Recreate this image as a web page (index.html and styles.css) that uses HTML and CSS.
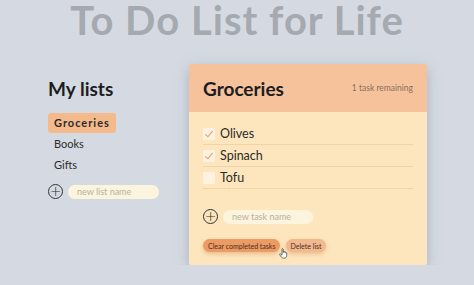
FILE: index.html
```html
<!DOCTYPE html>
<html lang="en">
<head>
  <meta charset="UTF-8" />
  <meta name="viewport" content="width=device-width, initial-scale=1.0"/>
  <title>To Do List for Life</title>
  <link rel="stylesheet" href="styles.css">
</head>
<body>
  <h1 class="title">To Do List for Life</h1>

  <div class="main">
    <div class="all-tasks">
      <h2 class="task-list-title">My lists</h2>
      <ul class="task-list">
        <li class="list-name active-list">Groceries</li>
        <li class="list-name">Books</li>
        <li class="list-name">Gifts</li>
      </ul>
      <form class="new-form" action="">
        <button class="btn-create" type="button">+</button>
        <input type="text" class="new new-list" placeholder="new list name">
      </form>
    </div>

    <div class="todo-list">
      <div class="todo-header">
        <h2 class="list-title">Groceries</h2>
        <p class="task-count">1 task remaining</p>
      </div>

      <div class="todo-body">
        <div class="tasks">
          <div class="task">
            <span class="check checked"></span>
            <span class="task-name">Olives</span>
          </div>
          <div class="task">
            <span class="check checked"></span>
            <span class="task-name">Spinach</span>
          </div>
          <div class="task">
            <span class="check"></span>
            <span class="task-name">Tofu</span>
          </div>
        </div>

        <form class="new-form new-task-form" action="">
          <button class="btn-create" type="button">+</button>
          <input type="text" class="new new-task" placeholder="new task name">
        </form>

        <div class="delete-stuff">
          <button class="btn-delete clear">Clear completed tasks
            <!-- mouse pointer from the screenshot -->
            <svg class="pointer" width="10" height="11" viewBox="0 0 10 11">
              <path d="M3 1.2c0-.7 1.2-.7 1.2 0v3.3l.2-.9c.2-.6 1.1-.5 1.1.1v.6c.2-.6 1.1-.5 1.1.1v.5c.3-.5 1.1-.3 1.1.3v2.4c0 1.4-1 2.6-2.4 2.6h-.9c-.9 0-1.5-.5-2-1.2L.6 6.7c-.4-.6.4-1.2.9-.7L3 7.2z" fill="#fff" stroke="#333" stroke-width=".7" stroke-linejoin="round"/>
            </svg>
          </button>
          <button class="btn-delete">Delete list</button>
        </div>
      </div>
    </div>
  </div>
</body>
</html>
```

FILE: styles.css
```css
* {
  box-sizing: border-box;
}

body {
  margin: 0;
  background-color: #d5dae2;
  font-family: 'Lato', sans-serif;
  color: #2b2b2b;
  overflow: hidden;
}

.title {
  margin: 0;
  text-align: center;
  font-size: 40px;
  line-height: 40px;
  font-weight: 700;
  color: #a5a9b0;
  letter-spacing: 1px;
}

.main {
  display: flex;
  align-items: flex-start;
  padding: 0 0 0 48px;
  margin-top: 24px;
}

.all-tasks {
  width: 141px;
  padding-top: 14px;
}

.task-list-title {
  margin: 0 0 13px;
  font-size: 19px;
  font-weight: 700;
  color: #1d1d1f;
  line-height: 22px;
}

.task-list {
  list-style: none;
  margin: 0;
  padding: 0;
  font-size: 11px;
}

.list-name {
  width: fit-content;
  height: 20px;
  line-height: 20px;
  padding: 0 6px;
  margin-bottom: 1px;
  border-radius: 3px;
  color: #2b2b2b;
}

.active-list {
  background-color: #f5ba8c;
  font-weight: 700;
  letter-spacing: 1px;
}

.new-form {
  display: flex;
  align-items: center;
  gap: 5px;
  margin-top: 9px;
}

.btn-create {
  width: 15px;
  height: 15px;
  padding: 0;
  border: 1.2px solid #333;
  border-radius: 50%;
  background: transparent;
  color: #333;
  font-size: 14px;
  line-height: 11px;
  font-family: 'DejaVu Sans', sans-serif;
  font-weight: 300;
  text-align: center;
}

.new {
  width: 91px;
  height: 14px;
  border: none;
  border-radius: 7px;
  background-color: #fdf4dd;
  padding: 0 9px;
  font-family: 'Lato', sans-serif;
  font-size: 9px;
  outline: none;
}

.new::placeholder {
  color: #b9b1a3;
}

.todo-list {
  width: 238px;
  background-color: #fde6bd;
  box-shadow: 0 4px 14px rgba(90, 110, 140, 0.35);
  border-radius: 2px;
}

.todo-header {
  display: flex;
  justify-content: space-between;
  align-items: center;
  height: 48px;
  padding: 0 14px 0 14px;
  background-color: #f6c29b;
  border-radius: 2px 2px 0 0;
}

.list-title {
  margin: 0;
  font-size: 19px;
  font-weight: 700;
  color: #1d1d1f;
}

.task-count {
  margin: 0;
  font-size: 8.5px;
  color: #8a6f5e;
}

.todo-body {
  padding: 11px 14px 13px;
}

.task {
  display: flex;
  align-items: center;
  gap: 5px;
  height: 22px;
  border-bottom: 1px solid #f1d3a8;
  font-size: 12.5px;
  color: #2b2b2b;
}

.check {
  width: 12px;
  height: 12px;
  background-color: #fdf2df;
  border-radius: 1px;
  position: relative;
}

.check.checked::after {
  content: '';
  position: absolute;
  left: 4px;
  top: 1px;
  width: 3px;
  height: 7px;
  border-right: 1.3px solid #e59c70;
  border-bottom: 1.3px solid #e59c70;
  transform: rotate(40deg);
}

.new-task-form {
  margin-top: 20px;
}

.new-task {
  width: 90px;
}

.delete-stuff {
  display: flex;
  gap: 6px;
  margin-top: 15px;
}

.btn-delete {
  height: 13px;
  padding: 0 4px;
  border: none;
  border-radius: 7px;
  background-color: #f2b890;
  color: #4a3020;
  font-family: 'Lato', sans-serif;
  font-size: 7px;
  box-shadow: 0 2px 4px rgba(200, 110, 50, 0.35);
}

.btn-delete.clear {
  position: relative;
  padding: 0 5px;
  background-color: #eb9b63;
}

.pointer {
  position: absolute;
  right: -9px;
  top: 9px;
}
```
